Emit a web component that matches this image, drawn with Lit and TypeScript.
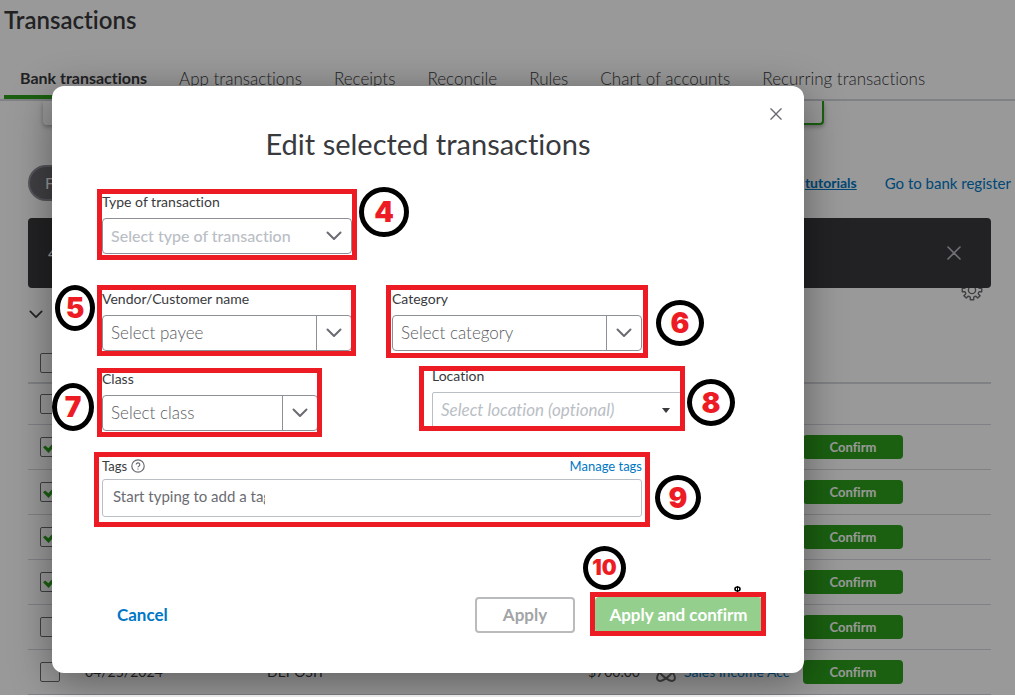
import { LitElement, html, css, svg, nothing } from "lit";
import { customElement, property } from "lit/decorators.js";
import { styleMap } from "lit/directives/style-map.js";

const tabs = [
  "Bank transactions",
  "App transactions",
  "Receipts",
  "Reconcile",
  "Rules",
  "Chart of accounts",
  "Recurring transactions",
];

interface Row {
  checked: boolean;
  date?: string;
  payee?: string;
  amount?: string;
  category?: string;
}

const rows: Row[] = [
  { checked: true },
  { checked: true },
  { checked: true },
  { checked: true },
  { checked: false },
  { checked: false, date: "04/25/2024", payee: "DEPOSIT", amount: "$700.00", category: "Sales Income Acc" },
];

// Tutorial call-outs, measured from the top left corner of the dialog.
const frames = [
  { x: 45, y: 103, w: 260, h: 71 },
  { x: 45, y: 199, w: 259, h: 71 },
  { x: 334, y: 199, w: 262, h: 73 },
  { x: 45, y: 282, w: 225, h: 69 },
  { x: 367, y: 280, w: 266, h: 65 },
  { x: 42, y: 366, w: 556, h: 75 },
  { x: 538, y: 506, w: 176, h: 44 },
];
const badges = [
  { n: "4", x: 307, y: 101, w: 50, h: 50 },
  { n: "5", x: 3, y: 199, w: 40, h: 46 },
  { n: "6", x: 604, y: 214, w: 48, h: 46 },
  { n: "7", x: 0, y: 297, w: 42, h: 48 },
  { n: "8", x: 635, y: 293, w: 48, h: 47 },
  { n: "9", x: 603, y: 389, w: 46, h: 45 },
  { n: "10", x: 531, y: 460, w: 43, h: 44 },
];

const chevron = svg`<path d="M1.5 1.5 L8 8 L14.5 1.5" fill="none" stroke="currentColor" stroke-width="2" stroke-linecap="round" stroke-linejoin="round"/>`;
const cross = svg`<path d="M1 1 L13 13 M13 1 L1 13" fill="none" stroke="currentColor" stroke-width="1.6" stroke-linecap="round"/>`;

@customElement("pick-field")
class PickField extends LitElement {
  @property() label = "";
  @property() hint = "";
  @property() kind = "combo";

  static styles = css`
    :host {
      display: block;
    }
    * {
      box-sizing: border-box;
    }
    label {
      display: block;
      font-size: 14px;
      line-height: 20px;
      margin-bottom: 6px;
      color: #393a3d;
    }
    .box {
      display: flex;
      align-items: stretch;
      height: 36px;
      border: 1px solid #8d9096;
      border-radius: 4px;
      position: relative;
      background: #fff;
      overflow: hidden;
    }
    input,
    select {
      flex: 1;
      min-width: 0;
      border: 0;
      outline: 0;
      margin: 0;
      padding: 0 8px;
      background: none;
      font: inherit;
      font-size: 17px;
      font-variant-ligatures: none;
      color: #6b6c72;
      appearance: none;
    }
    input::placeholder {
      color: #5a5b61;
      font-weight: 300;
      opacity: 1;
    }
    select {
      color: #babec5;
      font-size: 16px;
      font-weight: 500;
      opacity: 1;
    }
    button {
      width: 35px;
      padding: 0;
      border: 0;
      border-left: 1px solid #8d9096;
      background: none;
      color: #6b6c72;
      display: grid;
      place-items: center;
    }
    .plain button {
      width: 31px;
      border-left: 0;
    }
    .list .mark {
      position: absolute;
      right: 9px;
      top: 12px;
      color: #6b6c72;
      pointer-events: none;
    }
    .plain {
      border-color: #babec5;
      border-radius: 2px;
    }
    .plain input::placeholder {
      font-style: italic;
      font-weight: 400;
      color: #babec5;
    }
    .plain button {
      color: #393a3d;
    }
    svg {
      display: block;
    }
  `;

  render() {
    const mark = html`<svg class="mark" width="16" height="10" viewBox="0 0 16 10">${chevron}</svg>`;
    return html`
      <label for="control">${this.label}</label>
      <div class="box ${this.kind}">
        ${this.kind === "list"
          ? html`<select id="control"><option>${this.hint}</option></select>${mark}`
          : html`<input id="control" type="text" placeholder=${this.hint} />
              <button type="button" aria-label="Open list">
                ${this.kind === "plain"
                  ? html`<svg width="8" height="5" viewBox="0 0 8 5"><path d="M0 0H8L4 5Z" fill="currentColor" /></svg>`
                  : mark}
              </button>`}
      </div>
    `;
  }
}

@customElement("app-root")
class AppRoot extends LitElement {
  static styles = css`
    :host {
      display: block;
      position: relative;
      overflow: hidden;
      background: #fff;
      color: #393a3d;
      font-family: Lato, "Open Sans", sans-serif;
      font-size: 14px;
      line-height: 20px;
      font-variant-ligatures: none;
    }
    * {
      box-sizing: border-box;
    }
    svg {
      display: block;
    }
    a {
      color: #0077c5;
      text-decoration: none;
    }
    button {
      font: inherit;
      font-variant-ligatures: none;
      margin: 0;
    }

    h1 {
      margin: 0;
      padding: 4px 0 0 4px;
      font-size: 24px;
      line-height: 32px;
      font-weight: 600;
    }
    .tabs {
      display: flex;
      margin-top: 27px;
      padding-left: 4px;
      height: 38px;
      border-bottom: 2px solid #d4d7dc;
      white-space: nowrap;
    }
    .tabs a {
      display: block;
      height: 36px;
      padding: 6px 16px 0;
      font-size: 17px;
      line-height: 20px;
      font-weight: 300;
      color: #393a3d;
    }
    .tabs a.current {
      padding-top: 5px;
      font-size: 16px;
      font-weight: 700;
      border-bottom: 4px solid #2ca01c;
    }
    .cards {
      display: flex;
      gap: 24px;
      padding: 0 191px 40px 43px;
    }
    .card {
      flex: 1;
      height: 24px;
      border-radius: 0 0 4px 4px;
      box-shadow: 0 2px 4px rgba(0, 0, 0, 0.3);
    }
    .card.active {
      border: 2px solid #2ca01c;
      border-top: 0;
    }
    .views {
      display: flex;
      align-items: center;
      justify-content: space-between;
      padding: 0 4px 0 28px;
    }
    .pill {
      height: 36px;
      padding: 0 15px;
      border: 2px solid #8d9096;
      border-radius: 18px;
      background: #6b6c72;
      color: #fff;
      font-size: 16px;
    }
    .links {
      display: flex;
      gap: 28px;
      font-size: 15px;
    }
    .links .tour {
      text-decoration: underline;
      font-size: 14px;
      font-weight: 700;
    }
    .bar {
      position: relative;
      z-index: 1;
      display: flex;
      align-items: center;
      justify-content: space-between;
      height: 70px;
      margin: 17px 24px 0 28px;
      padding: 0 30px 0 20px;
      border-radius: 4px;
      background: #393a3d;
      color: #fff;
      font-size: 16px;
    }
    .bar button {
      padding: 0;
      border: 0;
      background: none;
      color: #babec5;
    }
    .tools {
      position: relative;
      display: flex;
      height: 56px;
      margin: 0 24px 0 28px;
      padding-top: 21px;
    }
    .tools button {
      height: 10px;
      padding: 0 0 0 1px;
      border: 0;
      background: none;
      color: #393a3d;
    }
    .tools .gear {
      position: absolute;
      right: 8px;
      top: -9px;
      height: 22px;
      color: #6b6c72;
    }

    table {
      width: calc(100% - 52px);
      margin-left: 28px;
      border-collapse: separate;
      border-spacing: 0;
      table-layout: fixed;
    }
    td,
    th {
      height: 45px;
      padding: 0;
      border-bottom: 1px solid #d4d7dc;
      text-align: left;
      font-weight: 400;
      white-space: nowrap;
    }
    th {
      height: 40px;
      border-bottom-width: 2px;
    }
    .filter td {
      height: 41px;
    }
    .c-check {
      width: 57px;
      padding-left: 12px;
    }
    .c-date {
      width: 182px;
    }
    .c-payee {
      width: 220px;
    }
    .c-amount {
      width: 153px;
      text-align: right;
    }
    .c-cat {
      width: 163px;
      padding-left: 16px;
    }
    .match {
      display: flex;
      align-items: center;
      gap: 8px;
      color: #6b6c72;
    }
    input[type="checkbox"] {
      display: block;
      position: relative;
      appearance: none;
      width: 20px;
      height: 20px;
      margin: 0;
      border: 1px solid #6b6c72;
      border-radius: 2px;
    }
    input[type="checkbox"]:checked::before {
      content: "";
      position: absolute;
      left: 2px;
      top: 3px;
      width: 14px;
      height: 12px;
      background: #2ca01c;
      clip-path: polygon(0 52%, 16% 38%, 38% 60%, 84% 4%, 100% 18%, 40% 100%);
    }
    .confirm {
      display: block;
      width: 100px;
      height: 24px;
      padding: 0;
      border: 0;
      border-radius: 4px;
      background: #2ca01c;
      color: #fff;
      font-size: 13px;
      line-height: 24px;
      font-weight: 700;
    }
    .foot {
      height: 2px;
      background: #fff;
    }

    .veil {
      position: absolute;
      inset: 0 0 2px;
      z-index: 2;
      padding: 86px 52px 0;
      background: rgba(0, 0, 0, 0.4);
    }
    .dialog {
      position: relative;
      max-width: 752px;
      padding: 40px 50px;
      border-radius: 12px;
      background: #fff;
      box-shadow: 0 8px 40px rgba(0, 0, 0, 0.4);
    }
    .close {
      position: absolute;
      right: 22px;
      top: 22px;
      padding: 0;
      border: 0;
      background: none;
      color: #6b6c72;
    }
    h2 {
      margin: 0 0 30px;
      font-size: 29px;
      line-height: 36px;
      font-weight: 400;
      text-align: center;
    }
    .pairs {
      display: grid;
      grid-template-columns: 250px 250px;
      gap: 35px 40px;
    }
    .pairs :first-child {
      grid-column: 1 / -1;
      width: 250px;
    }
    .offset {
      display: flex;
      align-items: flex-end;
      gap: 114px;
      margin-top: 15px;
    }
    .klass {
      width: 216px;
    }
    .place {
      width: 250px;
      padding-bottom: 3px;
    }
    .tags {
      width: 540px;
      margin-top: 25px;
    }
    .taghead {
      display: flex;
      align-items: center;
      gap: 4px;
      margin-bottom: 3px;
      font-size: 13px;
      line-height: 20px;
    }
    .taghead a {
      margin-left: auto;
    }
    .tagbox {
      height: 38px;
      padding: 0 10px;
      border: 1px solid #babec5;
      border-radius: 3px;
    }
    .tagbox input {
      width: 152px;
      height: 32px;
      padding: 0;
      border: 0;
      outline: 0;
      font: inherit;
      font-size: 15px;
      background: none;
    }
    .tagbox input::placeholder {
      color: #6b6c72;
      opacity: 1;
    }
    .actions {
      display: flex;
      gap: 20px;
      margin: 80px -8px 0 0;
      font-size: 17px;
      font-weight: 700;
    }
    .actions button {
      height: 36px;
      padding: 0;
      border-radius: 4px;
    }
    .actions .cancel {
      margin: 0 auto 0 0;
      padding: 0 15px;
      border: 0;
      background: none;
      color: #0077c5;
    }
    .apply {
      width: 100px;
      border: 2px solid #babbbd;
      background: #fff;
      color: #a3a4a6;
    }
    .both {
      width: 167px;
      border: 0;
      background: #95cf8d;
      color: #fff;
    }

    .frame {
      position: absolute;
      border: 5px solid #ed1c24;
      pointer-events: none;
    }
    .badge {
      position: absolute;
      display: grid;
      place-items: center;
      border: 5px solid #000;
      border-radius: 50%;
      background: #fff;
      color: #ed1c24;
      font-family: Inter, sans-serif;
      font-size: 28px;
      line-height: 28px;
      font-weight: 900;
    }
    .badge.small {
      font-size: 21px;
    }
    .speck {
      position: absolute;
      left: 682px;
      top: 500px;
    }
  `;

  private gear() {
    const teeth = Array.from({ length: 8 }, (_, i) => {
      const at = (r: number, deg: number) => {
        const a = ((i * 45 + deg) * Math.PI) / 180;
        return `${(11 + r * Math.cos(a)).toFixed(2)} ${(11 + r * Math.sin(a)).toFixed(2)}`;
      };
      return `${i ? "L" : "M"}${at(7.4, -13)}L${at(9.9, -10)}L${at(9.9, 10)}L${at(7.4, 13)}L${at(7, 22)}`;
    }).join("");
    return html`<svg width="22" height="22" viewBox="0 0 22 22" fill="none" stroke="currentColor" stroke-width="1.4" stroke-linejoin="round">
      <path d="${teeth}Z" /><circle cx="11" cy="11" r="3.6" />
    </svg>`;
  }

  private row(r: Row) {
    return html`<tr>
      <td class="c-check"><input type="checkbox" aria-label="Select transaction" .checked=${r.checked} /></td>
      <td>${r.date ?? nothing}</td>
      <td>${r.payee ?? nothing}</td>
      <td class="c-amount">${r.amount ?? nothing}</td>
      <td class="c-cat">
        ${r.category
          ? html`<div class="match">
              <svg width="20" height="20" viewBox="0 0 20 20" fill="none" stroke="currentColor" stroke-width="2">
                <ellipse cx="10" cy="10" rx="11.5" ry="5" transform="rotate(45 10 10)" />
                <ellipse cx="10" cy="10" rx="11.5" ry="5" transform="rotate(-45 10 10)" />
              </svg>
              <a href="#">${r.category}</a>
            </div>`
          : nothing}
      </td>
      <td><button class="confirm" type="button">Confirm</button></td>
    </tr>`;
  }

  render() {
    return html`
      <h1>Transactions</h1>
      <nav class="tabs">
        ${tabs.map((t, i) => html`<a href="#" class=${i === 0 ? "current" : ""}>${t}</a>`)}
      </nav>
      <div class="cards"><div class="card"></div><div class="card active"></div></div>
      <div class="views">
        <button class="pill" type="button">For review</button>
        <div class="links"><a class="tour" href="#">tutorials</a><a href="#">Go to bank register</a></div>
      </div>
      <div class="bar">
        <span>4</span>
        <button type="button" aria-label="Clear selection"><svg width="14" height="14" viewBox="0 0 14 14">${cross}</svg></button>
      </div>
      <div class="tools">
        <button type="button" aria-label="Collapse"><svg width="14" height="9" viewBox="0 0 16 10">${chevron}</svg></button>
        <button class="gear" type="button" aria-label="Settings">${this.gear()}</button>
      </div>
      <table>
        <thead>
          <tr>
            <th class="c-check"><input type="checkbox" aria-label="Select all" /></th>
            <th class="c-date"></th>
            <th class="c-payee"></th>
            <th class="c-amount"></th>
            <th class="c-cat"></th>
            <th></th>
          </tr>
        </thead>
        <tbody>
          <tr class="filter">
            <td class="c-check"><input type="checkbox" aria-label="Select transaction" /></td>
            <td colspan="5"></td>
          </tr>
          ${rows.map((r) => this.row(r))}
        </tbody>
      </table>
      <div class="foot"></div>

      <div class="veil">
        <section class="dialog" role="dialog" aria-labelledby="title">
          <button class="close" type="button" aria-label="Close">
            <svg width="12" height="12" viewBox="0 0 14 14">${cross}</svg>
          </button>
          <h2 id="title">Edit selected transactions</h2>
          <div class="pairs">
            <pick-field kind="list" label="Type of transaction" hint="Select type of transaction"></pick-field>
            <pick-field label="Vendor/Customer name" hint="Select payee"></pick-field>
            <pick-field label="Category" hint="Select category"></pick-field>
          </div>
          <div class="offset">
            <pick-field class="klass" label="Class" hint="Select class"></pick-field>
            <pick-field class="place" kind="plain" label="Location" hint="Select location (optional)"></pick-field>
          </div>
          <div class="tags">
            <div class="taghead">
              <label for="tags">Tags</label>
              <svg width="14" height="14" viewBox="0 0 14 14" fill="none" stroke="#6b6c72" stroke-width="1.2">
                <circle cx="7" cy="7" r="6.2" />
                <path d="M5.2 5.6a1.8 1.8 0 1 1 2.6 1.6c-.6.3-.8.5-.8 1.1M7 9.4v1.2" />
              </svg>
              <a href="#">Manage tags</a>
            </div>
            <div class="tagbox"><input id="tags" type="text" placeholder="Start typing to add a tag" /></div>
          </div>
          <div class="actions">
            <button class="cancel" type="button">Cancel</button>
            <button class="apply" type="button">Apply</button>
            <button class="both" type="button">Apply and confirm</button>
          </div>
          ${frames.map(
            (f) => html`<div
              class="frame"
              style=${styleMap({ left: `${f.x}px`, top: `${f.y}px`, width: `${f.w}px`, height: `${f.h}px` })}
            ></div>`
          )}
          ${badges.map(
            (b) => html`<div
              class="badge ${b.n.length > 1 ? "small" : ""}"
              style=${styleMap({ left: `${b.x}px`, top: `${b.y}px`, width: `${b.w}px`, height: `${b.h}px` })}
            >${b.n}</div>`
          )}
          <svg class="speck" width="7" height="6" viewBox="0 0 7 6">
            <ellipse cx="3.5" cy="3" rx="2.5" ry="2" fill="none" stroke="#000" stroke-width="1.6" />
            <path d="M3.5 0V6" stroke="#000" stroke-width="1" />
          </svg>
        </section>
      </div>
    `;
  }
}
